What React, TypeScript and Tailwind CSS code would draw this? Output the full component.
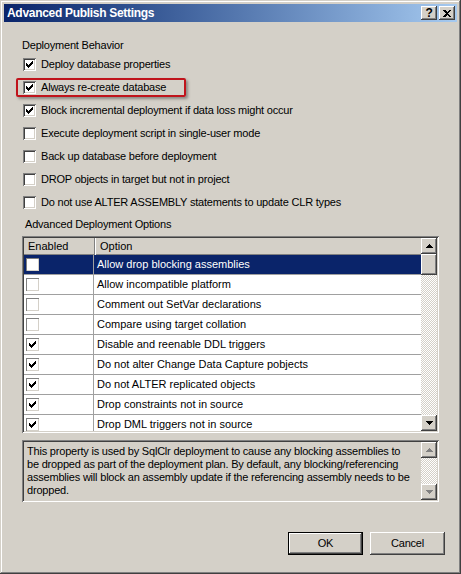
import React from "react";

// classic win2k 3d edges
const raised =
  "shadow-[inset_-1px_-1px_#404040,inset_1px_1px_#ffffff,inset_-2px_-2px_#808080,inset_2px_2px_#d4d0c8]";
const sunken =
  "shadow-[inset_1px_1px_#808080,inset_-1px_-1px_#ffffff,inset_2px_2px_#404040,inset_-2px_-2px_#d4d0c8]";
const dither =
  "bg-[repeating-conic-gradient(#ffffff_0_25%,#d4d0c8_0_50%)] bg-[length:2px_2px]";

const behavior = [
  { label: "Deploy database properties", on: true },
  { label: "Always re-create database", on: true, mark: true },
  { label: "Block incremental deployment if data loss might occur", on: true },
  { label: "Execute deployment script in single-user mode", on: false },
  { label: "Back up database before deployment", on: false },
  { label: "DROP objects in target but not in project", on: false },
  { label: "Do not use ALTER ASSEMBLY statements to update CLR types", on: false },
];

const options = [
  { label: "Allow drop blocking assemblies", on: false },
  { label: "Allow incompatible platform", on: false },
  { label: "Comment out SetVar declarations", on: false },
  { label: "Compare using target collation", on: false },
  { label: "Disable and reenable DDL triggers", on: true },
  { label: "Do not alter Change Data Capture pobjects", on: true },
  { label: "Do not ALTER replicated objects", on: true },
  { label: "Drop constraints not in source", on: true },
  { label: "Drop DML triggers not in source", on: true },
];

const description = [
  "This property is used by SqlClr deployment to cause any blocking assemblies to",
  "be dropped as part of the deployment plan. By default, any blocking/referencing",
  "assemblies will block an assembly update if the referencing assembly needs to be",
  "dropped.",
];

function Check() {
  // the old 7x7 pixel tick
  const cols = [2, 3, 4, 3, 2, 1, 0];
  return (
    <svg width="7" height="7" viewBox="0 0 7 7" shapeRendering="crispEdges">
      {cols.map((y, x) => (
        <rect key={x} x={x} y={y} width="1" height="3" fill="#000" />
      ))}
    </svg>
  );
}

function CheckBox({ on, flat }: { on: boolean; flat?: boolean }) {
  return (
    <div
      className={`flex h-[13px] w-[13px] shrink-0 items-center justify-center bg-white ${
        flat ? "shadow-[inset_1px_1px_#808080,inset_-1px_-1px_#d4d0c8]" : sunken
      }`}
    >
      {on && <Check />}
    </div>
  );
}

function Arrow({ up, disabled }: { up?: boolean; disabled?: boolean }) {
  const c = disabled ? "#808080" : "#000";
  return (
    <svg width="7" height="4" viewBox="0 0 7 4" shapeRendering="crispEdges">
      {up ? (
        <polygon points="3.5,0 7,4 0,4" fill={c} />
      ) : (
        <polygon points="0,0 7,0 3.5,4" fill={c} />
      )}
    </svg>
  );
}

function ScrollBtn({ up, disabled }: { up?: boolean; disabled?: boolean }) {
  return (
    <div className={`flex h-[16px] w-[16px] items-center justify-center bg-[#d4d0c8] ${raised}`}>
      <Arrow up={up} disabled={disabled} />
    </div>
  );
}

function Button({ children, primary }: { children: React.ReactNode; primary?: boolean }) {
  return (
    <div
      className={`flex h-[23px] w-[75px] items-center justify-center bg-[#d4d0c8] text-black ${
        primary
          ? "shadow-[inset_0_0_0_1px_#000,inset_-2px_-2px_#404040,inset_2px_2px_#ffffff,inset_-3px_-3px_#808080]"
          : raised
      }`}
    >
      {children}
    </div>
  );
}

export default function App() {
  return (
    <div
      className={`flex h-[574px] w-[461px] flex-col bg-[#d4d0c8] p-[4px] font-['Liberation_Sans',Arial,sans-serif] text-[11px] leading-[13px] tracking-[-0.2px] text-black shadow-[inset_-1px_-1px_#404040,inset_1px_1px_#d4d0c8,inset_-2px_-2px_#808080,inset_2px_2px_#ffffff]`}
    >
      {/* title bar */}
      <div className="flex h-[18px] shrink-0 items-center bg-gradient-to-r from-[#0a246a] to-[#a6caf0] pl-[3px] pr-[2px]">
        <span className="flex-1 text-[12px] font-bold tracking-[-0.3px] text-white">
          Advanced Publish Settings
        </span>
        <div className={`flex h-[14px] w-[16px] items-center justify-center bg-[#d4d0c8] ${raised}`}>
          <span className="text-[12px] font-bold leading-[12px]">?</span>
        </div>
        <div className={`ml-[2px] flex h-[14px] w-[16px] items-center justify-center bg-[#d4d0c8] ${raised}`}>
          <svg width="8" height="7" viewBox="0 0 8 7" shapeRendering="crispEdges">
            <path d="M0 0h2l2 2 2-2h2L5 3.5 8 7H6L4 5 2 7H0l3-3.5z" fill="#000" />
          </svg>
        </div>
      </div>

      <div className="flex flex-1 flex-col pl-[18px] pt-[17px]">
        <div className="h-[13px]">Deployment Behavior</div>

        <div className="mt-[1px] flex flex-col">
          {behavior.map((b) => (
            <div key={b.label} className="relative flex h-[23px] items-center pl-[1px]">
              <CheckBox on={b.on} />
              <span className="ml-[5px] whitespace-nowrap">{b.label}</span>
              {b.mark && (
                <div className="absolute left-[-6px] top-[2px] h-[19px] w-[170px] rounded-[2px] border-2 border-[#c0141c] shadow-[2px_2px_3px_rgba(0,0,0,0.35)]" />
              )}
            </div>
          ))}
        </div>

        <div className="ml-[3px] mt-[4px] h-[13px]">Advanced Deployment Options</div>

        {/* options grid */}
        <div className={`mt-[5px] flex h-[197px] w-[417px] p-[2px] tracking-normal ${sunken} bg-white`}>
          <div className="flex min-w-0 flex-1 flex-col overflow-hidden">
            <div className="flex h-[17px] shrink-0 bg-[#d4d0c8]">
              <div className="flex w-[71px] items-center pl-[4px] shadow-[inset_-1px_0_#808080,inset_0_-1px_#808080]">
                Enabled
              </div>
              <div className="flex flex-1 items-center pl-[5px] shadow-[inset_1px_0_#ffffff,inset_0_-1px_#808080]">
                Option
              </div>
            </div>
            {options.map((o, i) => {
              const sel = i === 0;
              return (
                <div
                  key={o.label}
                  className={`flex h-[20px] shrink-0 border-b border-[#a0a0a0] ${
                    sel ? "bg-[#0a246a] text-white" : "bg-white"
                  }`}
                >
                  <div className="flex w-[70px] items-center border-r border-[#a0a0a0] pl-[2px]">
                    <CheckBox on={o.on} flat />
                  </div>
                  <div className="flex flex-1 items-center whitespace-nowrap pl-[3px]">{o.label}</div>
                </div>
              );
            })}
          </div>
          <div className={`flex w-[16px] flex-col ${dither}`}>
            <ScrollBtn up />
            <div className={`h-[21px] w-[16px] bg-[#d4d0c8] ${raised}`} />
            <div className="flex-1" />
            <ScrollBtn />
          </div>
        </div>

        {/* description */}
        <div className={`mt-[7px] flex h-[62px] w-[417px] p-[2px] ${sunken} bg-[#d4d0c8]`}>
          <div className="flex-1 pl-[3px] pt-[3px]">
            {description.map((l) => (
              <div key={l} className="whitespace-nowrap">
                {l}
              </div>
            ))}
          </div>
          <div className={`flex w-[16px] flex-col ${dither}`}>
            <ScrollBtn up disabled />
            <div className="flex-1" />
            <ScrollBtn disabled />
          </div>
        </div>

        <div className="mt-[30px] flex justify-end gap-[7px] pr-[12px]">
          <Button primary>OK</Button>
          <Button>Cancel</Button>
        </div>
      </div>
    </div>
  );
}
